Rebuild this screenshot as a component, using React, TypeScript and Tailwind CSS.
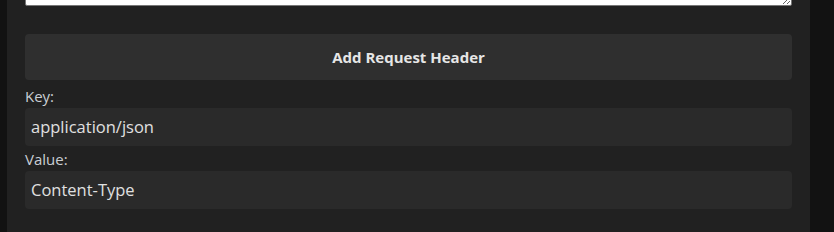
export default function App() {
  return (
    <div className="h-[232px] overflow-hidden bg-[#121212] font-['Open_Sans',sans-serif]">
      <div className="ml-[7px] w-[803px] h-full flex flex-col bg-[#212121] px-[18px]">
        {/* textarea bottom edge (scrolled) */}
        <textarea
          readOnly
          className="block shrink-0 w-full h-[60px] -mt-[54px] bg-white border border-[#767676] rounded-[2px]"
        />

        <button className="shrink-0 mt-[28px] w-full h-[46px] rounded-[4px] bg-[#2f2f2f] text-[15px] font-bold text-[#e6e6e6]">
          Add Request Header
        </button>

        <label className="block mt-[3px] pt-[2px] text-[15px] leading-[23px] text-[#c9ced4]">Key:</label>
        <div className="shrink-0 h-[38px] rounded-[4px] bg-[#2a2a2a] px-[6px] flex items-center text-[16.5px] text-[#e0e0e0]">
          application/json
        </div>

        <label className="block pt-[2px] text-[15px] leading-[23px] text-[#c9ced4]">Value:</label>
        <div className="shrink-0 h-[38px] rounded-[4px] bg-[#2a2a2a] px-[6px] flex items-center text-[16.5px] text-[#e0e0e0]">
          Content-Type
        </div>
      </div>
    </div>
  );
}
